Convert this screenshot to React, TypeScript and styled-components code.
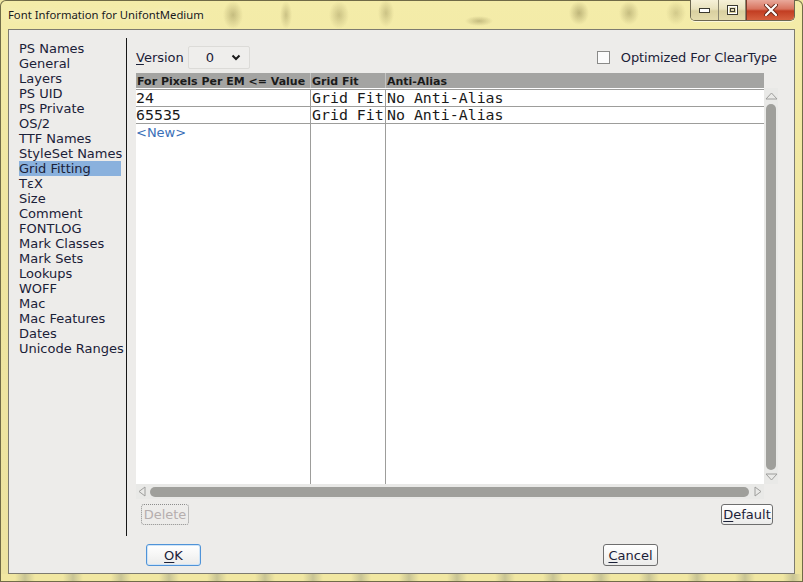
import React from 'react';
import styled, { createGlobalStyle } from 'styled-components';

const Global = createGlobalStyle`
  html, body { margin: 0; padding: 0; }
  body { width: 803px; height: 582px; overflow: hidden; background: #efe6a0; font-family: "DejaVu Sans", sans-serif; }
`;

const Frame = styled.div`
  width: 803px;
  height: 582px;
  box-sizing: border-box;
  display: flex;
  flex-direction: column;
  border: 1px solid rgba(70, 66, 40, 0.75);
  border-radius: 6px 6px 0 0;
  padding: 0 7px 7px 7px;
  background:
    repeating-linear-gradient(90deg, #f1e7a2 0px, #f1e7a2 14px, #c8c494 24px, #f1e7a2 34px, #f1e7a2 48px) left bottom / 100% 7px no-repeat,
    radial-gradient(ellipse 10px 14px at 232px 14px, rgba(110, 100, 50, 0.35), transparent),
    radial-gradient(ellipse 6px 14px at 285px 14px, rgba(110, 100, 50, 0.3), transparent),
    radial-gradient(ellipse 10px 14px at 338px 14px, rgba(110, 100, 50, 0.3), transparent),
    radial-gradient(ellipse 8px 14px at 385px 12px, rgba(110, 100, 50, 0.3), transparent),
    radial-gradient(ellipse 14px 5px at 478px 20px, rgba(110, 100, 50, 0.35), transparent),
    radial-gradient(ellipse 10px 12px at 578px 12px, rgba(110, 100, 50, 0.4), transparent),
    radial-gradient(ellipse 10px 12px at 628px 12px, rgba(110, 100, 50, 0.35), transparent),
    radial-gradient(ellipse 10px 12px at 675px 12px, rgba(110, 100, 50, 0.25), transparent),
    linear-gradient(180deg, #f4eca9 0%, #efe59f 40%, #ede3a0 100%);
`;

const TitleBar = styled.div`
  height: 28px;
  display: flex;
  align-items: flex-start;
`;

const Title = styled.div`
  font-family: "Noto Sans", "Open Sans", sans-serif;
  font-size: 11.3px;
  color: #1a1a1a;
  padding: 6px 0 0 0;
  text-shadow: 0 0 6px rgba(255, 255, 240, 0.9);
`;

const Caption = styled.div`
  margin-left: auto;
  margin-top: -1px;
  display: flex;
  height: 20px;
  border: 1px solid #6b6650;
  border-top: none;
  border-radius: 0 0 5px 5px;
  overflow: hidden;
  box-shadow: 0 1px 0 rgba(255, 255, 255, 0.6);
`;

const CapBtn = styled.div<{ $close?: boolean; $w: number }>`
  width: ${p => p.$w}px;
  height: 20px;
  display: flex;
  align-items: center;
  justify-content: center;
  border-left: ${p => (p.$close ? '1px solid #7a3a2a' : 'none')};
  border-right: ${p => (p.$close ? 'none' : '1px solid #8a8670')};
  background: ${p =>
    p.$close
      ? 'linear-gradient(180deg, #e9a99b 0%, #d8735e 45%, #c23d22 55%, #d6603f 100%)'
      : 'linear-gradient(180deg, #f6f1d8 0%, #e9e2bd 45%, #d9d0a0 55%, #e4dcae 100%)'};
`;

const Client = styled.div`
  flex: 1;
  display: flex;
  flex-direction: column;
  background: #edecea;
  border: 1px solid #7d7b70;
`;

const Body = styled.div`
  flex: 1;
  display: flex;
`;

const Sidebar = styled.div`
  width: 118px;
  box-sizing: border-box;
  padding: 11px 0 0 10px;
  display: flex;
  flex-direction: column;
`;

const NavItem = styled.div<{ $sel?: boolean }>`
  width: 102px;
  height: 15px;
  line-height: 15px;
  font-size: 13px;
  color: #1b2138;
  white-space: nowrap;
  background: ${p => (p.$sel ? '#8ab1dd' : 'transparent')};
`;

const Separator = styled.div`
  width: 1px;
  background: #161616;
  margin: 8px 0 1px 0;
`;

const Main = styled.div`
  flex: 1;
  padding: 16px 16px 0 9px;
  display: flex;
  flex-direction: column;
`;

const TopRow = styled.div`
  height: 23px;
  display: flex;
  align-items: center;
  font-size: 13px;
  color: #1b2138;
`;

const Label = styled.span`
  margin-top: -1px;
`;

const U = styled.span`
  text-decoration: underline;
  text-underline-offset: 2px;
`;

const Select = styled.div`
  margin-left: 4px;
  width: 62px;
  height: 23px;
  box-sizing: border-box;
  border: 1px solid #dcdbd8;
  border-radius: 2px;
  background: #efeeec;
  display: flex;
  align-items: center;
  padding-left: 17px;
  font-size: 13px;
  color: #1b2138;
`;

const Chevron = styled.svg`
  margin-left: 17px;
`;

const Check = styled.div`
  margin-left: auto;
  width: 13px;
  height: 13px;
  box-sizing: border-box;
  border: 1px solid #8a8a88;
  background: #fbfbfb;
`;

const CheckLabel = styled.span`
  margin-left: 11px;
  margin-right: 1px;
  letter-spacing: -0.12px;
`;

const TableGrid = styled.div`
  margin-top: 4px;
  display: grid;
  grid-template-columns: 628px 14px;
  grid-template-rows: 15px 396px 15px;
`;

const Cols = styled.div`
  display: grid;
  grid-template-columns: 175px 75px 1fr;
`;

const Header = styled(Cols)`
  background: #a4a4a2;
`;

const HeadCell = styled.div<{ $last?: boolean }>`
  font-size: 11px;
  font-weight: bold;
  color: #1a1a1a;
  line-height: 13px;
  height: 15px;
  padding-left: 1px;
  padding-top: 2px;
  box-sizing: border-box;
  white-space: nowrap;
  border-right: ${p => (p.$last ? 'none' : '1px solid #c4c4c2')};
`;

const HeadCorner = styled.div``;

const TableBody = styled(Cols)`
  background: #ffffff;
  border-top: 1px solid #ffffff;
  overflow: hidden;
`;

const Column = styled.div<{ $last?: boolean }>`
  display: flex;
  flex-direction: column;
  border-right: ${p => (p.$last ? 'none' : '1px solid #9d9d9b')};
  border-top: 1px solid #9d9d9b;
`;

const Cell = styled.div<{ $pad: number }>`
  height: 16px;
  border-bottom: 1px solid #9d9d9b;
  font-family: "DejaVu Sans Mono", monospace;
  font-size: 14.9px;
  line-height: 16px;
  color: #1a1a1a;
  padding-left: ${p => p.$pad}px;
  white-space: nowrap;
`;

const NewCell = styled.div`
  height: 17px;
  font-size: 13px;
  line-height: 17px;
  color: #3a6fb8;
`;

const VScroll = styled.div`
  background: #e9e9e7;
  display: flex;
  flex-direction: column;
  align-items: center;
  padding: 3px 0 2px 0;
  box-sizing: border-box;
`;

const VThumb = styled.div`
  width: 10px;
  flex: 1;
  margin: 4px 0 3px 0;
  border-radius: 5px;
  background: #9f9f9b;
`;

const HScroll = styled.div`
  background: #e9e9e7;
  display: flex;
  align-items: center;
  padding: 0 1px 0 1px;
`;

const HThumb = styled.div`
  height: 10px;
  flex: 1;
  margin: 0 5px 0 4px;
  border-radius: 5px;
  background: #9f9f9b;
`;

const Corner = styled.div``;

const ButtonRow = styled.div`
  margin-top: 5px;
  display: flex;
  justify-content: space-between;
  padding: 0 5px;
`;

const Btn = styled.div<{ $w: number; $kind?: 'default' | 'disabled' }>`
  width: ${p => p.$w}px;
  height: 21px;
  box-sizing: border-box;
  display: flex;
  align-items: center;
  justify-content: center;
  font-size: 13px;
  border-radius: 3px;
  color: ${p => (p.$kind === 'disabled' ? '#b5aeae' : '#1b2138')};
  border: ${p =>
    p.$kind === 'disabled'
      ? '1px dotted #8c8c8c'
      : p.$kind === 'default'
      ? '1px solid #4f93d8'
      : '1px solid #6e6e6e'};
  background: ${p =>
    p.$kind === 'disabled' ? 'transparent' : 'linear-gradient(180deg, #ffffff 0%, #f6f6f5 50%, #ebebea 100%)'};
  box-shadow: ${p => (p.$kind === 'default' ? 'inset 0 0 0 1px #cfe4f7' : 'none')};
`;

const Footer = styled.div`
  height: 36px;
  box-sizing: border-box;
  padding: 7px 136px 0 137px;
  display: flex;
  justify-content: space-between;
  align-items: flex-start;
`;

const FootBtn = styled(Btn)`
  height: 22px;
`;

const ArrowSvg = styled.svg`
  flex: none;
`;

const Arrow: React.FC<{ dir: 'up' | 'down' | 'left' | 'right' }> = ({ dir }) => {
  const pts: Record<string, string> = {
    up: '1,8 6.5,2 12,8',
    down: '1,1 6.5,7 12,1',
    left: '8,1 2,5.5 8,10',
    right: '1,1 7,5.5 1,10',
  };
  const vertical = dir === 'up' || dir === 'down';
  return (
    <ArrowSvg width={vertical ? 13 : 9} height={vertical ? 9 : 11} viewBox={vertical ? '0 0 13 9' : '0 0 9 11'}>
      <polygon points={pts[dir]} fill="none" stroke="#9e9e9c" strokeWidth="1" />
    </ArrowSvg>
  );
};

const navItems = [
  'PS Names', 'General', 'Layers', 'PS UID', 'PS Private', 'OS/2', 'TTF Names', 'StyleSet Names',
  'Grid Fitting', 'TεX', 'Size', 'Comment', 'FONTLOG', 'Mark Classes', 'Mark Sets', 'Lookups',
  'WOFF', 'Mac', 'Mac Features', 'Dates', 'Unicode Ranges',
];

const rows = [
  { ppem: '24', fit: 'Grid Fit', aa: 'No Anti-Alias' },
  { ppem: '65535', fit: 'Grid Fit', aa: 'No Anti-Alias' },
];

export default function App() {
  return (
    <>
      <Global />
      <Frame>
        <TitleBar>
          <Title>Font Information for UnifontMedium</Title>
          <Caption>
            <CapBtn $w={27}>
              <svg width="11" height="5" viewBox="0 0 11 5">
                <rect x="0.5" y="0.5" width="10" height="4" fill="#ffffff" stroke="#3b3a30" />
              </svg>
            </CapBtn>
            <CapBtn $w={26}>
              <svg width="11" height="10" viewBox="0 0 11 10">
                <rect x="0.5" y="0.5" width="10" height="9" fill="none" stroke="#3b3a30" />
                <rect x="1.5" y="1.5" width="8" height="7" fill="none" stroke="#ffffff" />
                <rect x="3.5" y="3.5" width="4" height="3" fill="none" stroke="#3b3a30" />
              </svg>
            </CapBtn>
            <CapBtn $w={47} $close>
              <svg width="14" height="12" viewBox="0 0 14 12">
                <path d="M2 1 L12 11 M12 1 L2 11" stroke="#6a2a1a" strokeWidth="4" strokeLinecap="round" />
                <path d="M2 1 L12 11 M12 1 L2 11" stroke="#ffffff" strokeWidth="2.2" strokeLinecap="round" />
              </svg>
            </CapBtn>
          </Caption>
        </TitleBar>
        <Client>
          <Body>
            <Sidebar>
              {navItems.map(n => (
                <NavItem key={n} $sel={n === 'Grid Fitting'}>{n}</NavItem>
              ))}
            </Sidebar>
            <Separator />
            <Main>
              <TopRow>
                <Label><U>V</U>ersion</Label>
                <Select>
                  0
                  <Chevron width="10" height="7" viewBox="0 0 10 7">
                    <path d="M1.5 1.5 L5 5 L8.5 1.5" fill="none" stroke="#1a1a1a" strokeWidth="2" />
                  </Chevron>
                </Select>
                <Check />
                <CheckLabel>Optimized For ClearType</CheckLabel>
              </TopRow>
              <TableGrid>
                <Header>
                  <HeadCell>For Pixels Per EM &lt;= Value</HeadCell>
                  <HeadCell>Grid Fit</HeadCell>
                  <HeadCell $last>Anti-Alias</HeadCell>
                </Header>
                <HeadCorner />
                <TableBody>
                  <Column>
                    {rows.map(r => (
                      <Cell key={r.ppem} $pad={0}>{r.ppem}</Cell>
                    ))}
                    <NewCell>&lt;New&gt;</NewCell>
                  </Column>
                  <Column>
                    {rows.map(r => (
                      <Cell key={r.ppem} $pad={1}>{r.fit}</Cell>
                    ))}
                  </Column>
                  <Column $last>
                    {rows.map(r => (
                      <Cell key={r.ppem} $pad={1}>{r.aa}</Cell>
                    ))}
                  </Column>
                </TableBody>
                <VScroll>
                  <Arrow dir="up" />
                  <VThumb />
                  <Arrow dir="down" />
                </VScroll>
                <HScroll>
                  <Arrow dir="left" />
                  <HThumb />
                  <Arrow dir="right" />
                </HScroll>
                <Corner />
              </TableGrid>
              <ButtonRow>
                <Btn $w={48} $kind="disabled">Delete</Btn>
                <Btn $w={52}><span><U>D</U>efault</span></Btn>
              </ButtonRow>
            </Main>
          </Body>
          <Footer>
            <FootBtn $w={55} $kind="default"><span><U>O</U>K</span></FootBtn>
            <FootBtn $w={55}><span><U>C</U>ancel</span></FootBtn>
          </Footer>
        </Client>
      </Frame>
    </>
  );
}
